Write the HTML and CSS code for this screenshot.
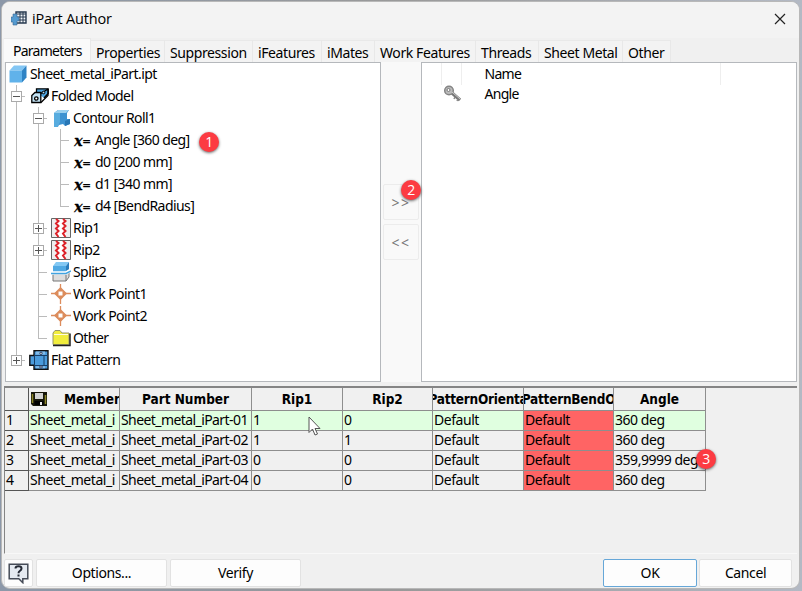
FILE: index.html
```
<!DOCTYPE html>
<html>
<head>
<meta charset="utf-8">
<title>iPart Author</title>
<link rel="stylesheet" href="styles.css">
</head>
<body>
<!-- shared tree icons -->
<svg class="defs">
	<symbol id="i-rip" viewBox="0 0 20 20">
		<path d="M.5.5h19v19H.5z" fill="#eee" stroke="#666"/>
		<path d="M5.500 1h9v18h-9z" fill="#fff"/>
		<path d="M5 1l2.500 2-2.500 2.500L7.500 8 5 10.500 7.500 13 5 15.500 7.500 19M12 1l2.500 2-2.500 2.500L14.500 8 12 10.500l2.500 2.500-2.500 2.500 2.500 3.500" fill="none" stroke="#dc2229" stroke-width="2"/>
	</symbol>
	<symbol id="i-point" viewBox="0 0 20 20">
		<path d="M9.500 0v20M0 9.500h20" stroke="#dc8c5c" stroke-width="1.300"/>
		<path d="M9.500 4l5.500 5.500-5.500 5.500L4 9.500z" fill="#dc8c5c" stroke="#dc8c5c" stroke-width="1.500"/>
		<path d="M7.500 7.500h4v4h-4z" fill="#fff"/>
	</symbol>
</svg>
<div class="window">
	<div class="titlebar">
		<svg class="appicon" width="16" height="16" viewBox="0 0 16 16">
			<path d="M5 1h10v11H5z" fill="#f5f8fb" stroke="#26384f" stroke-width="1.400"/>
			<path d="M5 3h10M5 6h10M5 9h10M9 1v11M12 1v11" stroke="#26384f"/>
			<path d="M2 3h4v3h2v4H6v4H2v-3H0V6h2z" fill="#559bd0" stroke="#3c6890" stroke-width=".6"/>
		</svg>
		<span class="title">iPart Author</span>
		<svg class="close" width="12" height="12" viewBox="0 0 12 12"><path d="M1 1l10 10M11 1L1 11" stroke="#222" stroke-width="1.200"/></svg>
	</div>
	<div class="tabs">
		<div class="tab w1 active"><span>Parameters</span></div>
		<div class="tab w2"><span>Properties</span></div>
		<div class="tab w3"><span>Suppression</span></div>
		<div class="tab w4"><span>iFeatures</span></div>
		<div class="tab w5"><span>iMates</span></div>
		<div class="tab w6"><span>Work Features</span></div>
		<div class="tab w7"><span>Threads</span></div>
		<div class="tab w8"><span>Sheet Metal</span></div>
		<div class="tab w9"><span>Other</span></div>
	</div>
	<div class="panes">
		<div class="tree">
			<div class="node root"><i class="ico"><svg width="18" height="18" viewBox="0 0 18 18"><path d="M.5 5.500L5 .5h12.500L13 5.500z" fill="#83c6f4"/><path d="M13 5.500L17.500.5v12L13 17.500z" fill="#2e83c5"/><path d="M.5 5.500H13v12H.5z" fill="#60b2ea"/></svg></i><span>Sheet_metal_iPart.ipt</span></div>
			<div class="node"><b class="g first box"></b><i class="ico"><svg width="18" height="16" viewBox="0 0 18 16"><path d="M5.500 4.500V.8h11.700v4.700L13 10" fill="#4ea3dc" stroke="#000" stroke-width="1.300"/><path d="M.8 7.500L4 4.500h5.800v10H.8z" fill="#c2e2f4" stroke="#000" stroke-width="1.300"/><path d="M10 5.500l7-4.500M10 14.500l7-7V1" fill="none" stroke="#000" stroke-width="1.300"/><circle cx="5.300" cy="10.500" r="1.700" fill="#fff" stroke="#000" stroke-width="1.300"/><circle cx="12.500" cy="4.500" r="1.300" fill="#b8def5" stroke="#000"/></svg></i><span>Folded Model</span></div>
			<div class="node"><b class="g line"></b><b class="g first box"></b><i class="ico"><svg width="17" height="18" viewBox="0 0 17 18"><path d="M1 4l4-3h11l-2 3v6h3v5l-5 2-2-2-4 1-2 2H1z" fill="#3d92d1"/><path d="M1 4h6v9l-2 5H1z" fill="#58acdf"/><path d="M1 4l4-3h11l-3 3H7z" fill="#9ad0ef"/><path d="M12 12l5-2v5l-5 2z" fill="#2876b5"/><path d="M14 4h3v6h-3z" fill="#fff"/></svg></i><span>Contour Roll1</span></div>
			<div class="node"><b class="g line"></b><b class="g line"></b><b class="g tee"></b><i class="ico eq"><em>x</em>=</i><span>Angle [360 deg]</span></div>
			<div class="node"><b class="g line"></b><b class="g line"></b><b class="g tee"></b><i class="ico eq"><em>x</em>=</i><span>d0 [200 mm]</span></div>
			<div class="node"><b class="g line"></b><b class="g line"></b><b class="g tee"></b><i class="ico eq"><em>x</em>=</i><span>d1 [340 mm]</span></div>
			<div class="node"><b class="g line"></b><b class="g line"></b><b class="g tee last"></b><i class="ico eq"><em>x</em>=</i><span>d4 [BendRadius]</span></div>
			<div class="node"><b class="g line"></b><b class="g box plus"></b><i class="ico big"><svg width="20" height="20"><use href="#i-rip"/></svg></i><span>Rip1</span></div>
			<div class="node"><b class="g line"></b><b class="g box plus"></b><i class="ico big"><svg width="20" height="20"><use href="#i-rip"/></svg></i><span>Rip2</span></div>
			<div class="node"><b class="g line"></b><b class="g tee"></b><i class="ico big"><svg width="20" height="20" viewBox="0 0 20 20"><path d="M2 12h13v7H2zM15 12l3-3v6l-3 4" fill="#ddd" stroke="#777"/><path d="M2 4l3-4h13l-3 4z" fill="#83c8f3"/><path d="M2 4h13v6H2z" fill="#50a9e3"/><path d="M15 4l3-4v8l-3 3z" fill="#2a7cbb"/><path d="M0 11h15l5-3" fill="none" stroke="#fff" stroke-width="3.500"/><path d="M0 11.500h15l5-2.500" fill="none" stroke="#41a3e0" stroke-width="1.500"/></svg></i><span>Split2</span></div>
			<div class="node"><b class="g line"></b><b class="g tee"></b><i class="ico big"><svg width="20" height="20"><use href="#i-point"/></svg></i><span>Work Point1</span></div>
			<div class="node"><b class="g line"></b><b class="g tee"></b><i class="ico big"><svg width="20" height="20"><use href="#i-point"/></svg></i><span>Work Point2</span></div>
			<div class="node"><b class="g line"></b><b class="g tee last"></b><i class="ico big"><svg width="20" height="18" viewBox="0 0 20 18"><path d="M2 15.500V4l2-2.500h5L11 4h7v11.500z" fill="#f1ed3d" stroke="#99976a"/><path d="M3 5.500h14" stroke="#fffde0"/><path d="M2 16.500h17V4.500" fill="none" stroke="#222" stroke-width="1.500"/></svg></i><span>Other</span></div>
			<div class="node"><b class="g box plus end"></b><i class="ico big"><svg width="20" height="20" viewBox="0 0 20 20"><path d="M5 .7h14v18.600H5v-4H.8V5.500H5z" fill="#4b9bdb" stroke="#111" stroke-width="1.400"/><path d="M5.500 5.500v10M15 5.500v10M5 5.500h14M5 15.500h14" stroke="#173e66" fill="none"/><path d="M7 1.500h9v3H7zM7 16.300h9v2H7z" fill="#83bce9"/><circle cx="12" cy="3.300" r="1.200" fill="#fff" stroke="#235"/><circle cx="12" cy="17" r="1.200" fill="#fff" stroke="#235"/></svg></i><span>Flat Pattern</span></div>
		</div>
		<div class="mover">
			<div class="mv">&gt;&gt;</div>
			<div class="mv">&lt;&lt;</div>
		</div>
		<div class="keys">
			<div class="keyrow head"><i></i><i class="c2"></i><span>Name</span><i class="c4"></i></div>
			<div class="keyrow">
				<svg width="20" height="18" viewBox="0 0 20 18"><path d="M9 8l8 7" stroke="#777" stroke-width="3.400"/><path d="M12 12l-1 2M15 14l-1 2" stroke="#888" stroke-width="1.500"/><circle cx="6" cy="5.500" r="4.300" fill="#bbb" stroke="#858585" stroke-width="1.500"/><circle cx="5.500" cy="5" r="1.500" fill="#fff" stroke="#777"/><path d="M9 7l8 7" stroke="#ccc" stroke-width="1"/></svg>
				<span>Angle</span>
			</div>
		</div>
	</div>
	<div class="sheet">
		<table>
			<colgroup><col class="k0"><col class="k1"><col class="k2"><col class="k1"><col class="k3"><col class="k1"><col class="k3"><col class="k4"></colgroup>
			<tr class="hd">
				<th></th>
				<th class="member"><div><svg width="16" height="14" viewBox="0 0 16 14"><path d="M0 0h16v14H2l-2-2z" fill="#17170b"/><path d="M1.500 2v9M14.500 3v9" stroke="#8d8728" stroke-width="1.500"/><path d="M4 1h8v6H4z" fill="#d2d2d2"/><path d="M3.500 9h9v4h-9z" fill="#000"/><path d="M9 10h2v3H9z" fill="#eee"/></svg><span>Member</span></div></th>
				<th><div>Part Number</div></th>
				<th><div>Rip1</div></th>
				<th><div>Rip2</div></th>
				<th><div class="tight">PatternOrienta</div></th>
				<th><div class="tight">PatternBendO</div></th>
				<th><div>Angle</div></th>
			</tr>
			<tr class="sel"><td>1</td><td>Sheet_metal_i</td><td>Sheet_metal_iPart-01</td><td>1</td><td>0</td><td>Default</td><td class="bad">Default</td><td>360 deg</td></tr>
			<tr><td>2</td><td>Sheet_metal_i</td><td>Sheet_metal_iPart-02</td><td>1</td><td>1</td><td>Default</td><td class="bad">Default</td><td>360 deg</td></tr>
			<tr><td>3</td><td>Sheet_metal_i</td><td>Sheet_metal_iPart-03</td><td>0</td><td>0</td><td>Default</td><td class="bad">Default</td><td>359,9999 deg</td></tr>
			<tr><td>4</td><td>Sheet_metal_i</td><td>Sheet_metal_iPart-04</td><td>0</td><td>0</td><td>Default</td><td class="bad">Default</td><td>360 deg</td></tr>
		</table>
	</div>
	<div class="footer">
		<div class="but help"><svg width="21" height="21" viewBox="0 0 21 21"><path d="M1.200 1.200h18.600v14.500h-5v4l-4-4H1.200z" fill="#e5eaf1" stroke="#454b57" stroke-width="1.500"/><path d="M7.500 5.500c0-3 6-3 6 0 0 2.500-3 2-3 4.700M10.500 11.500v2" fill="none" stroke="#252a35" stroke-width="2"/></svg></div>
		<div class="but wide">Options...</div>
		<div class="but wide">Verify</div>
		<div class="but ok">OK</div>
		<div class="but cancel">Cancel</div>
	</div>
</div>
<!-- step markers and mouse pointer over the dialog -->
<div class="mark m1">1</div>
<div class="mark m2">2</div>
<div class="mark m3">3</div>
<svg class="cursor" width="14" height="20" viewBox="0 0 14 20"><path d="M1 1v15.500l3.500-3.500 2.500 6 2.500-1-2.500-5.500h5z" fill="#fff" stroke="#555"/></svg>
</body>
</html>
```
FILE: styles.css
```
* {
	box-sizing: border-box;
}
body {
	margin: 0;
	height: 591px;
	overflow: hidden;
	padding: 1px 2px 2px 1px;
	background: linear-gradient(90deg, #8c98a9 0, #999 50%, #b3b9c4 100%);
	font-family: "Noto Sans", "Open Sans", sans-serif;
	font-size: 14px;
	letter-spacing: -0.4px;
	color: #000;
}
.defs {
	display: none;
}
svg {
	display: block;
	flex: none;
}
.window {
	height: 588px;
	border: 1px solid #b8b8b8;
	border-radius: 9px;
	background: #f0f0f0;
	overflow: hidden;
	padding: 0 2px 0 2px;
}
.titlebar {
	display: flex;
	align-items: center;
	height: 36px;
	margin: 0 -2px 0 -2px;
	padding: 0 13px 3px 9px;
	background: #f3f3f3;
}
.title {
	font-family: "Open Sans", sans-serif;
	font-size: 14.5px;
	letter-spacing: -0.2px;
	margin-left: 5px;
	flex: 1;
}
/* tabs */
.tabs {
	display: flex;
	align-items: flex-end;
	height: 24px;
}
.tab {
	height: 22px;
	line-height: 23px;
	padding-left: 5px;
	border-right: 1px solid #e8e8e8;
	border-top: 1px solid #e9e9e9;
	background: #f3f3f3;
	white-space: nowrap;
	letter-spacing: -0.4px;
}
.tab.active {
	height: 24px;
	line-height: 23px;
	padding-left: 9px;
	letter-spacing: -0.8px;
	letter-spacing: -0.75px;
	background: #fafafa;
}
.w1 { width: 87px; }
.w2 { width: 74px; }
.w3 { width: 88px; }
.w4 { width: 69px; }
.w5 { width: 53px; }
.w6 { width: 101px; }
.w7 { width: 63px; }
.w8 { width: 84px; }
.w9 { width: 48px; }
/* upper part: tree, buttons, key list */
.panes {
	display: flex;
	height: 320px;
	margin-left: 1px;
	background: #f9f9f9;
}
.tree, .keys {
	width: 376px;
	border: 1px solid #b5b8bc;
	background: #fff;
}
.node {
	display: flex;
	height: 22px;
	line-height: 22px;
	letter-spacing: -0.58px;
	white-space: nowrap;
}
.root {
	padding-left: 1px;
}
.g {
	width: 22px;
	flex: none;
	background: linear-gradient(#bbb, #bbb) 10px 0 / 1px 22px no-repeat;
}
.tee {
	background: linear-gradient(#bbb, #bbb) 10px 0 / 1px 22px no-repeat, linear-gradient(#bbb, #bbb) 11px 11px / 8px 1px no-repeat;
}
.last {
	background-size: 1px 12px, 8px 1px;
}
.box {
	background:
		linear-gradient(#555, #555) 7px 11px / 7px 1px no-repeat,
		linear-gradient(#fff, #fff) 6px 7px / 9px 9px no-repeat,
		linear-gradient(#aaa, #aaa) 5px 6px / 11px 11px no-repeat,
		linear-gradient(#bbb, #bbb) 16px 11px / 3px 1px no-repeat,
		linear-gradient(#bbb, #bbb) 10px 0 / 1px 22px no-repeat;
}
.plus {
	background:
		linear-gradient(#555, #555) 7px 11px / 7px 1px no-repeat,
		linear-gradient(#555, #555) 10px 8px / 1px 7px no-repeat,
		linear-gradient(#fff, #fff) 6px 7px / 9px 9px no-repeat,
		linear-gradient(#aaa, #aaa) 5px 6px / 11px 11px no-repeat,
		linear-gradient(#bbb, #bbb) 16px 11px / 3px 1px no-repeat,
		linear-gradient(#bbb, #bbb) 10px 0 / 1px 22px no-repeat;
}
.end {
	background-size: 7px 1px, 1px 7px, 9px 9px, 11px 11px, 3px 1px, 1px 12px;
}
.ico {
	display: flex;
	align-items: center;
	justify-content: center;
	width: 22px;
	margin-left: 1px;
	padding-right: 1px;
	flex: none;
}
.root .ico {
	justify-content: flex-start;
	padding-left: 1px;
}
.big {
	padding-right: 2px;
}
.eq {
	font: bold 11px "DejaVu Sans", sans-serif;
	letter-spacing: -0.5px;
	padding-top: 2px;
	margin-left: 0;
	margin-right: 1px;
}
.eq em {
	font: italic bold 14px "DejaVu Serif", serif;
	-webkit-text-stroke: 0.3px #000;
}
.mover {
	width: 41px;
	padding: 122px 2px 0 2px;
}
.mv {
	height: 36px;
	margin-bottom: 4px;
	border: 1px solid #ececec;
	border-radius: 2px;
	text-align: center;
	line-height: 35px;
	letter-spacing: 1.500px;
	color: #777;
}
.keyrow {
	display: flex;
	height: 20px;
	line-height: 18px;
	padding-left: 20px;
}
.keyrow.head {
	height: 22px;
	line-height: 21px;
	padding-left: 0;
}
.head i {
	width: 20px;
	border-right: 1px solid #eee;
}
.head .c2 {
	width: 20px;
}
.head span {
	width: 239px;
	margin-left: 20px;
	padding-left: 2px;
	letter-spacing: -0.7px;
	border-right: 1px solid #eee;
}
.head .c4 {
	border: 0;
}
.keyrow span {
	letter-spacing: -0.7px;
}
.keyrow svg {
	margin: 0 20px 0 1px;
}
.keyrow svg + span {
	padding-left: 1px;
}
/* member table */
.sheet {
	height: 168px;
	margin-top: 4px;
	border-top: 2px solid #858585;
	border-left: 1px solid #858585;
	border-bottom: 1px solid #f8f8f8;
}
table {
	table-layout: fixed;
	width: 701px;
	border-collapse: separate;
	border-spacing: 0;
}
.k0 { width: 24px; }
.k1 { width: 91px; }
.k2 { width: 132px; }
.k3 { width: 90px; }
.k4 { width: 92px; }
th, td {
	height: 20px;
	padding: 0 0 2px 1px;
	border-right: 1px solid #8e8e8e;
	border-bottom: 1px solid #8e8e8e;
	line-height: 17px;
	letter-spacing: -0.45px;
	text-align: left;
	white-space: nowrap;
	overflow: hidden;
}
.hd th {
	height: 23px;
	padding: 0 0 1px;
	font: bold 13.5px "DejaVu Sans Condensed", "DejaVu Sans", sans-serif;
	letter-spacing: 0;
}
th div {
	display: flex;
	justify-content: center;
	overflow: hidden;
}
.hd .tight {
	letter-spacing: -0.25px;
}
.member div {
	justify-content: flex-start;
	padding-left: 2px;
	align-items: center;
}
.member span {
	margin-left: 17px;
}
tr th:first-child, tr td:first-child {
	border-right: 1px solid #555;
	border-bottom-color: #555;
}
td:nth-child(3) {
	letter-spacing: -0.58px;
}
.sel td {
	background: #e0ffe0;
}
.sel td:first-child {
	background: #f0f0f0;
}
td.bad, .sel td.bad {
	background: #ff6464;
}
/* footer */
.footer {
	display: flex;
	padding-top: 5px;
}
.but {
	height: 28px;
	line-height: 26px;
	border: 1px solid #e2e2e2;
	border-radius: 2px;
	background: #fdfdfd;
	text-align: center;
}
.help {
	width: 29px;
	padding: 3px;
	margin-right: 3px;
}
.wide {
	width: 131px;
	margin-right: 3px;
}
.ok {
	width: 94px;
	margin-left: auto;
	margin-right: 2px;
	border-color: #66a7d8;
}
.cancel {
	width: 93px;
	margin-right: 5px;
}
/* overlays */
.mark {
	position: absolute;
	width: 20px;
	height: 20px;
	border-radius: 50%;
	background: #fc3b42;
	box-shadow: 0 1px 3px rgba(0, 0, 0, .6);
	color: #fff;
	font: 14px/20px "Open Sans", sans-serif;
	text-align: center;
}
.m1 { left: 199px; top: 132px; }
.m2 { left: 401px; top: 180px; }
.m3 { left: 696px; top: 449px; }
.cursor {
	position: absolute;
	left: 308px;
	top: 416px;
}
```
